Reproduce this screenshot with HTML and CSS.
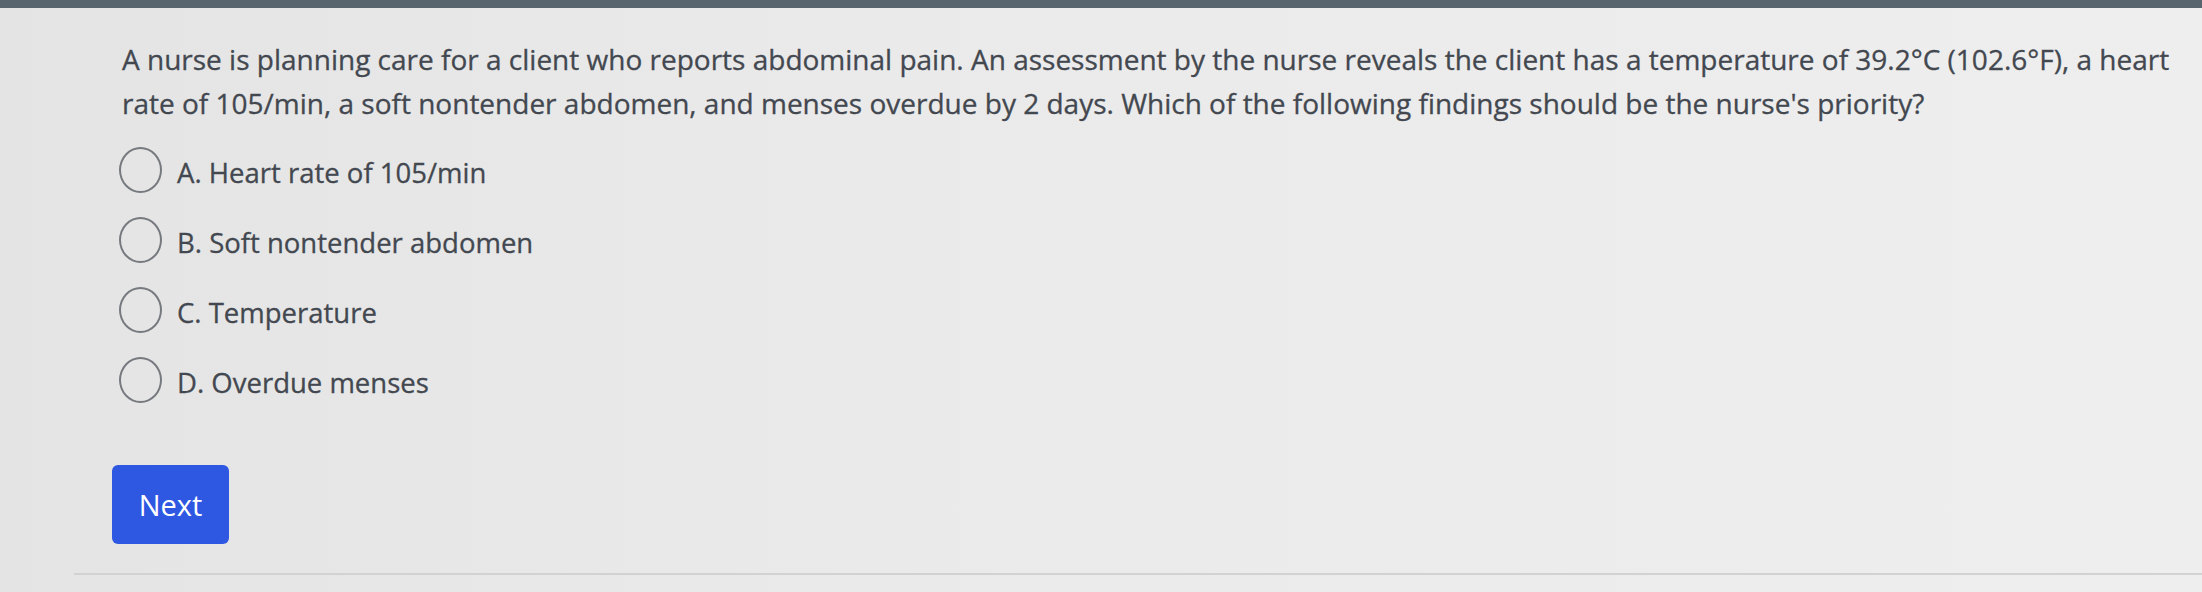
FILE: index.html
```html
<!DOCTYPE html>
<html lang="en">
<head>
<meta charset="utf-8">
<title>Question</title>
<link rel="stylesheet" href="styles.css">
</head>
<body>
<div class="topbar"></div>
<main class="page">
  <p class="question">A nurse is planning care for a client who reports abdominal pain. An assessment by the nurse reveals the client has a temperature of 39.2°C (102.6°F), a heart rate of 105/min, a soft nontender abdomen, and menses overdue by 2 days. Which of the following findings should be the nurse's priority?</p>
  <ul class="options">
    <li class="option"><span class="radio"></span><span class="label">A. Heart rate of 105/min</span></li>
    <li class="option"><span class="radio"></span><span class="label">B. Soft nontender abdomen</span></li>
    <li class="option"><span class="radio"></span><span class="label">C. Temperature</span></li>
    <li class="option"><span class="radio"></span><span class="label">D. Overdue menses</span></li>
  </ul>
  <button class="next" type="button">Next</button>
  <hr class="divider">
</main>
</body>
</html>
```
FILE: styles.css
```css
html, body {
  margin: 0;
  padding: 0;
}
body {
  width: 2202px;
  height: 592px;
  overflow: hidden;
  background: linear-gradient(90deg, #e4e4e4 0%, #eaeaea 40%, #eeeeee 100%);
  font-family: "Open Sans", "Noto Sans", sans-serif;
  color: #434850;
}
.topbar {
  height: 8px;
  background: #58646e;
}
.page {
  padding: 29px 0 0 112px;
}
.question {
  margin: 0 0 10px 10px;
  font-size: 28px;
  line-height: 44px;
  max-width: 2075px;
  -webkit-text-stroke: 0.3px #434850;
}
.options {
  list-style: none;
  margin: 0 0 50px 7px;
  padding: 0;
}
.option {
  display: flex;
  align-items: center;
  gap: 15px;
  height: 70px;
}
.radio {
  width: 39px;
  height: 42px;
  border: 2px solid #767a7f;
  border-radius: 50%;
  flex: none;
}
.label {
  font-size: 27.5px;
  padding-top: 4px;
  -webkit-text-stroke: 0.3px #434850;
}
.next {
  display: block;
  width: 117px;
  height: 79px;
  border: none;
  border-radius: 6px;
  background: #2e57e2;
  color: #ffffff;
  font-family: "Open Sans", "Noto Sans", sans-serif;
  font-size: 29px;
  padding: 0;
}
.divider {
  margin: 29px 0 0 -38px;
  border: none;
  border-top: 2px solid #d2d2d2;
  height: 0;
}
```
